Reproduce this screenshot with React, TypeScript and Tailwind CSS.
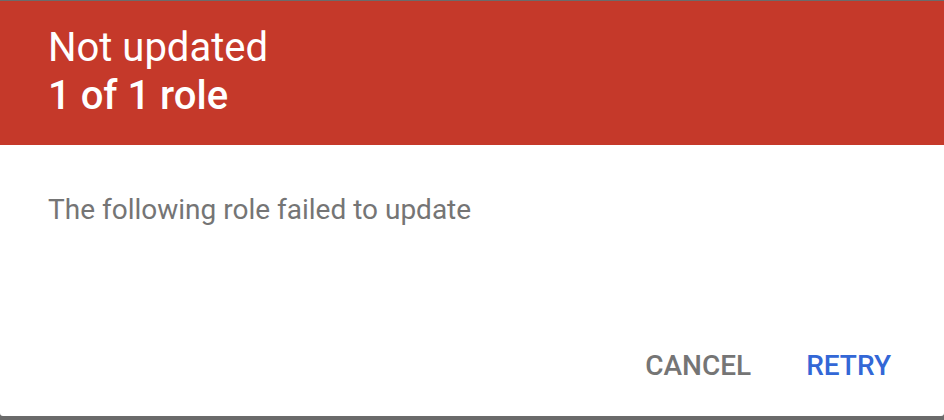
export default function App() {
  return (
    <div className="w-[944px] h-[420px] bg-[#6b6b6b] pt-px pb-[4px] overflow-hidden" style={{ fontFamily: 'Roboto, "Noto Sans", sans-serif' }}>
      <div className="h-[415px] bg-white rounded-b-[3px] flex flex-col overflow-hidden">
        <div className="bg-[#c5392a] h-[144px] px-[48px] pt-[23px] text-white">
          <div className="text-[40px] leading-[48px] font-normal">Not updated</div>
          <div className="text-[40px] leading-[48px] font-medium">1 of 1 role</div>
        </div>
        <div className="px-[48px] pt-[47px] flex-1">
          <p className="text-[28px] leading-[36px] text-[#757575]">The following role failed to update</p>
        </div>
        <div className="flex justify-end items-center pr-[37px] pb-[32px] gap-[23px]">
          <button className="px-[16px] h-[36px] text-[28px] leading-[36px] font-medium text-[#757575]">CANCEL</button>
          <button className="px-[16px] h-[36px] text-[28px] leading-[36px] font-medium text-[#3367d6]">RETRY</button>
        </div>
      </div>
    </div>
  )
}
